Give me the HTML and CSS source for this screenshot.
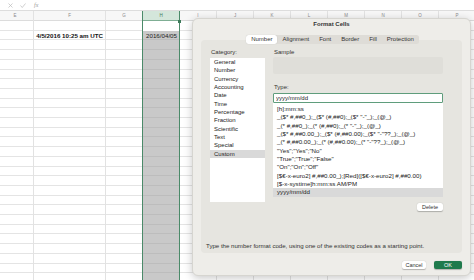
FILE: index.html
```html
<!DOCTYPE html>
<html lang="en">
  <head>
    <meta charset="UTF-8" />
    <meta name="viewport" content="width=device-width, initial-scale=1.0" />
    <title>Format Cells</title>
    <link rel="stylesheet" href="styles.css">
  </head>
  <body>
    <div class="toolbar">
      <svg class="tool" width="5" height="5" viewBox="0 0 10 10"><path d="M1 1 L9 9 M9 1 L1 9" /></svg>
      <svg class="tool" width="6" height="5" viewBox="0 0 12 10"><path d="M1 5 L4.5 9 L11 1" /></svg>
      <span class="fx">fx</span>
    </div>

    <div class="sheet">
      <div class="col col-e"><div class="head">E</div><div class="cells"></div></div>
      <div class="col col-f">
        <div class="head">F</div>
        <div class="cells">
          <div class="cell"></div>
          <div class="cell bold">4/5/2016 10:25 am UTC</div>
        </div>
      </div>
      <div class="col col-g"><div class="head">G</div><div class="cells"></div></div>
      <div class="col col-h">
        <div class="head">H</div>
        <div class="cells">
          <div class="cell active"><span class="handle"></span></div>
          <div class="cell">2016/04/05</div>
        </div>
      </div>
      <div class="col"><div class="head">I</div><div class="cells"></div></div>
      <div class="col"><div class="head">J</div><div class="cells"></div></div>
      <div class="col"><div class="head">K</div><div class="cells"></div></div>
      <div class="col"><div class="head">L</div><div class="cells"></div></div>
      <div class="col"><div class="head">M</div><div class="cells"></div></div>
      <div class="col"><div class="head">N</div><div class="cells"></div></div>
      <div class="col"><div class="head">O</div><div class="cells"></div></div>
      <div class="col"><div class="head">P</div><div class="cells"></div></div>
    </div>

    <div class="dialog">
      <div class="title">Format Cells</div>
      <div class="tabs">
        <span class="tab selected">Number</span>
        <span class="tab">Alignment</span>
        <span class="tab">Font</span>
        <span class="tab">Border</span>
        <span class="tab">Fill</span>
        <span class="tab">Protection</span>
      </div>

      <div class="panel">
        <div class="panel-body">
          <div class="category">
            <div class="label">Category:</div>
            <ul class="list category-list">
              <li>General</li>
              <li>Number</li>
              <li>Currency</li>
              <li>Accounting</li>
              <li>Date</li>
              <li>Time</li>
              <li>Percentage</li>
              <li>Fraction</li>
              <li>Scientific</li>
              <li>Text</li>
              <li>Special</li>
              <li class="selected">Custom</li>
            </ul>
          </div>

          <div class="details">
            <div class="label">Sample</div>
            <div class="sample"></div>
            <div class="label type-label">Type:</div>
            <input class="type-input" type="text" value="yyyy/mm/dd" />
            <ul class="list type-list">
              <li>[h]:mm:ss</li>
              <li>_($* #,##0_);_($* (#,##0);_($* "-"_);_(@_)</li>
              <li>_(* #,##0_);_(* (#,##0);_(* "-"_);_(@_)</li>
              <li>_($* #,##0.00_);_($* (#,##0.00);_($* "-"??_);_(@_)</li>
              <li>_(* #,##0.00_);_(* (#,##0.00);_(* "-"??_);_(@_)</li>
              <li>"Yes";"Yes";"No"</li>
              <li>"True";"True";"False"</li>
              <li>"On";"On";"Off"</li>
              <li>[$€-x-euro2] #,##0.00_);[Red]([$€-x-euro2] #,##0.00)</li>
              <li>[$-x-systime]h:mm:ss AM/PM</li>
              <li class="selected">yyyy/mm/dd</li>
            </ul>
            <div class="delete-row">
              <button class="btn">Delete</button>
            </div>
          </div>
        </div>
        <div class="hint">Type the number format code, using one of the existing codes as a starting point.</div>
      </div>

      <div class="footer">
        <button class="btn">Cancel</button>
        <button class="btn primary">OK</button>
      </div>
    </div>
  </body>
</html>
```

FILE: styles.css
```css
body {
  margin: 0;
  width: 474px;
  height: 280px;
  overflow: hidden;
  position: relative;
  background: #ffffff;
  font-family: "Liberation Sans", Arial, sans-serif;
  color: #222;
}
.toolbar {
  height: 10px;
  display: flex;
  align-items: center;
  gap: 7px;
  padding-left: 8px;
  border-bottom: 1px solid #dddddd;
  background: #ffffff;
}
.tool {
  fill: none;
  stroke: #bcbcbc;
  stroke-width: 1.4;
}
.fx {
  font-family: "Liberation Serif", serif;
  font-style: italic;
  font-size: 6px;
  color: #9a9a9a;
  margin-left: 1px;
}
.sheet {
  display: flex;
  margin-left: -3px;
}
.col {
  width: 37px;
  flex-shrink: 0;
  border-right: 1px solid #e2e2e2;
  box-sizing: border-box;
}
.col-f {
  width: 72px;
}
.col-h {
  width: 38px;
}
.head {
  height: 9px;
  line-height: 9px;
  text-align: center;
  font-size: 4.5px;
  color: #8a8a8a;
  background: #f7f7f7;
  border-bottom: 1px solid #dcdcdc;
}
.cells {
  height: 270px;
  background: repeating-linear-gradient(
    to bottom,
    transparent 0,
    transparent 8.7px,
    #e4e4e4 8.7px,
    #e4e4e4 9.7px
  );
}
.cell {
  height: 9.7px;
  line-height: 9.7px;
  font-size: 6.2px;
  text-align: right;
  padding-right: 2px;
  box-sizing: border-box;
  white-space: nowrap;
}
.bold {
  font-weight: bold;
  color: #111;
}
.col-h {
  border-left: 1px solid #4b8a69;
  border-right: 1px solid #4b8a69;
  margin-left: -1px;
  position: relative;
}
.col-h .head {
  background: #d4e6db;
  color: #3d7a5a;
  border-bottom: 1px solid #7fae94;
}
.col-h .cells {
  background-color: #c9c9c9;
  background-image: repeating-linear-gradient(
    to bottom,
    transparent 0,
    transparent 8.7px,
    #bdbdbd 8.7px,
    #bdbdbd 9.7px
  );
}
.col-h .cell {
  color: #222;
}
.cell.active {
  background: #ffffff;
  position: relative;
}
.handle {
  position: absolute;
  right: -2px;
  top: -1px;
  width: 3px;
  height: 3px;
  background: #3d7a5a;
}

/* dialog */
.dialog {
  position: absolute;
  left: 192px;
  top: 18px;
  width: 279px;
  height: 258px;
  box-sizing: border-box;
  background: #eeede9;
  border: 1px solid #d6d5d0;
  border-radius: 6px;
  box-shadow: 0 2px 8px rgba(0, 0, 0, 0.22);
  display: flex;
  flex-direction: column;
}
.title {
  height: 10px;
  line-height: 10px;
  text-align: center;
  font-size: 6px;
  font-weight: bold;
  color: #333;
}
.tabs {
  align-self: center;
  display: flex;
  height: 9px;
  margin-top: 6px;
  margin-bottom: -4px;
  margin-left: 2px;
  background: #dedcd7;
  border-radius: 2.5px;
  position: relative;
  z-index: 1;
}
.tab {
  line-height: 9px;
  font-size: 6px;
  padding: 0 5px;
  color: #333;
  border-radius: 2.5px;
}
.tab.selected {
  background: #ffffff;
  box-shadow: 0 0 1px rgba(0, 0, 0, 0.2);
}
.panel {
  margin: 0 8px;
  height: 213px;
  box-sizing: border-box;
  background: #e6e5e0;
  border-radius: 4px;
  padding-top: 8px;
  display: flex;
  flex-direction: column;
}
.panel-body {
  display: flex;
  gap: 8px;
  padding-left: 9px;
}
.label {
  font-size: 6px;
  line-height: 8px;
  color: #333;
  padding-left: 1px;
}
.category {
  width: 55px;
}
.category .label {
  margin-bottom: 2px;
}
.list {
  list-style: none;
  margin: 0;
  padding: 0;
  background: #ffffff;
}
.list li {
  font-size: 6px;
  line-height: 8.35px;
  height: 8.35px;
  padding-left: 4px;
  white-space: nowrap;
  overflow: hidden;
  color: #222;
}
.list li.selected {
  background: #d9d9d9;
}
.category-list {
  height: 144px;
}
.details {
  width: 170px;
}
.sample {
  margin-top: 1px;
  height: 17px;
  background: #dfded9;
  border-radius: 2px;
}
.type-label {
  margin-top: 9px;
}
.type-input {
  display: block;
  width: 100%;
  height: 10px;
  margin: 2px 0 0;
  padding: 0 2px;
  box-sizing: border-box;
  border: 1px solid #5f9d7c;
  border-radius: 1px;
  font-family: "Liberation Sans", Arial, sans-serif;
  font-size: 6px;
  color: #222;
  background: #ffffff;
  outline: none;
}
.type-list {
  height: 92px;
  padding-top: 2px;
  box-sizing: border-box;
}
.type-list li {
  font-size: 6.2px;
}
.delete-row {
  display: flex;
  justify-content: flex-end;
  margin-top: 8px;
}
.btn {
  height: 8px;
  padding: 0 5px;
  font-family: "Liberation Sans", Arial, sans-serif;
  font-size: 5.5px;
  line-height: 8px;
  color: #333;
  background: #ffffff;
  border: none;
  border-radius: 2px;
  box-shadow: 0 0.5px 1px rgba(0, 0, 0, 0.25);
}
.hint {
  margin-top: auto;
  padding: 0 0 3px 5px;
  font-size: 6.1px;
  line-height: 8px;
  color: #333;
}
.footer {
  display: flex;
  justify-content: flex-end;
  gap: 8px;
  margin: 8px 8px 0 0;
}
.footer .btn {
  width: 24px;
  padding: 0;
}
.footer .btn.primary {
  width: 28px;
  background: #1f7a4c;
  color: #ffffff;
}
```
